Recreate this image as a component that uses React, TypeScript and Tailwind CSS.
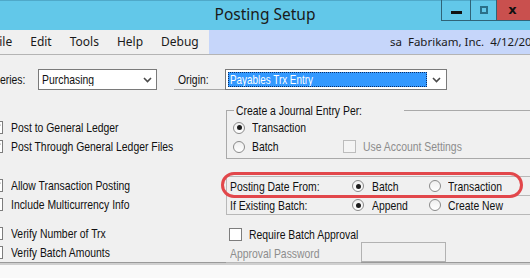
import React from "react";

const T = ({ children, className = "" }: { children: React.ReactNode; className?: string }) => (
  <span className={"inline-block origin-left scale-x-[0.8] whitespace-nowrap " + className}>{children}</span>
);

const Chevron = () => (
  <svg width="9" height="6" viewBox="0 0 9 6" className="block">
    <polyline points="1,1 4.5,4.5 8,1" fill="none" stroke="#4a4a4a" strokeWidth="1.6" />
  </svg>
);

const Check = ({ checked = false, disabled = false }: { checked?: boolean; disabled?: boolean }) => (
  <span
    className={
      "flex-none w-[13px] h-[13px] border flex items-center justify-center " +
      (disabled ? "border-[#bcbcbc] bg-[#f4f4f4]" : "border-[#7d7d7d] bg-white")
    }
  >
    {checked && (
      <svg width="9" height="9" viewBox="0 0 9 9">
        <polyline points="1,4.5 3.5,7 8,1.5" fill="none" stroke="#222" strokeWidth="1.6" />
      </svg>
    )}
  </span>
);

const Radio = ({ checked = false }: { checked?: boolean }) => (
  <span className="flex-none w-[12px] h-[12px] rounded-full border border-[#8a8a8a] bg-gradient-to-b from-[#efefef] to-white flex items-center justify-center">
    {checked && <span className="w-[5px] h-[5px] rounded-full bg-[#1c1c1c]" />}
  </span>
);

const LeftCheck = ({ label, checked = false }: { label: string; checked?: boolean }) => (
  <div className="h-[19px] flex items-center gap-[8px] ml-[-10px]">
    <Check checked={checked} />
    <T>{label}</T>
  </div>
);

export default function App() {
  return (
    <div className="w-[530px] h-[278px] overflow-hidden bg-[#f0f0f0] flex flex-col text-[#111] font-['Liberation_Sans',Arial,sans-serif] text-[13px] leading-none">
      {/* Title bar */}
      <div className="relative flex-none h-[30px] bg-[#62c8e9] border-t border-[#4fa9c9] flex items-center justify-center">
        <span className="font-['Noto_Sans','Open_Sans',sans-serif] text-[15.5px] text-[#1a1a1a] mt-[-1px]">
          Posting Setup
        </span>
        <div className="absolute right-0 top-[-1px] flex h-[21px] border-l border-b border-[#2f6478]">
          <div className="w-[29px] h-full border-r border-[#2f6478] flex items-center justify-center">
            <span className="w-[11px] h-[3px] bg-[#111] mt-[5px]" />
          </div>
          <div className="w-[26px] h-full border-r border-[#2f6478] flex items-center justify-center">
            <span className="w-[8px] h-[8px] border-2 border-[#2a6f88] mt-[-1px]" />
          </div>
          <div className="w-[33px] h-full bg-[#c9504e] flex items-center justify-center">
            <span className="font-['DejaVu_Sans',sans-serif] font-bold text-[13px] text-[#111] mt-[-2px] ml-[-2px]">x</span>
          </div>
        </div>
      </div>

      {/* Menu bar */}
      <div className="flex-none h-[25px] flex border-b border-[#b4b4b4] font-['Noto_Sans','Open_Sans',sans-serif] text-[12px] text-[#1a1a1a]">
        <div className="w-[209px] flex-none bg-[#f0f0f0] overflow-hidden flex items-center">
          <div className="flex items-center gap-[18px] ml-[-7px] whitespace-nowrap">
            <span>File</span>
            <span>Edit</span>
            <span>Tools</span>
            <span>Help</span>
            <span>Debug</span>
          </div>
        </div>
        <div className="flex-1 bg-[#c6d6fa] flex items-center pl-[181px] whitespace-pre overflow-hidden text-[11.5px]">
          <span>sa  Fabrikam, Inc.  4/12/2017</span>
        </div>
      </div>

      {/* Content */}
      <div className="flex-none h-[208px] flex flex-col border-b border-[#9a9a9a]">
        {/* Series / Origin row */}
        <div className="mt-[14px] h-[21px] flex items-center">
          <div className="w-[38px] flex-none overflow-hidden">
            <div className="ml-[-7px]">
              <T>Series:</T>
            </div>
          </div>
          <div className="w-[119px] h-[21px] flex-none border border-[#7a7a7a] bg-white flex items-center pl-[3px] pr-[4px]">
            <div className="flex-1 overflow-hidden">
              <T>Purchasing</T>
            </div>
            <Chevron />
          </div>
          <div className="ml-[17px] w-[51px] h-[21px] flex-none border-b border-[#a8a8a8] flex items-center pl-[4px]">
            <T>Origin:</T>
          </div>
          <div className="w-[222px] h-[21px] flex-none border border-[#7a7a7a] bg-white flex items-center pl-[2px] pr-[5px]">
            <div className="w-[199px] h-[15px] bg-[#3399ff] border border-dotted border-[#0d2f66] flex items-center pl-[1px] text-white overflow-hidden">
              <T className="scale-x-[0.76]">Payables Trx Entry</T>
            </div>
            <div className="flex-1 flex justify-end">
              <Chevron />
            </div>
          </div>
        </div>

        {/* Two columns */}
        <div className="flex">
          {/* Left */}
          <div className="w-[226px] flex-none pt-[28px] flex flex-col">
            <LeftCheck label="Post to General Ledger" checked />
            <LeftCheck label="Post Through General Ledger Files" checked />
            <div className="h-[20px]" />
            <LeftCheck label="Allow Transaction Posting" checked />
            <LeftCheck label="Include Multicurrency Info" />
            <div className="h-[10px]" />
            <LeftCheck label="Verify Number of Trx" />
            <LeftCheck label="Verify Batch Amounts" />
          </div>

          {/* Right */}
          <div className="flex-1 flex flex-col">
            {/* Group box */}
            <div className="relative mt-[20px] border-t border-l border-b border-[#a9a9a9] pt-[7px] pb-[2px] pl-[6px]">
              <div className="absolute left-[7px] top-[-8px] w-[170px] h-[15px] bg-[#f0f0f0] pl-[2px] flex items-center">
                <T>Create a Journal Entry Per:</T>
              </div>
              <div className="h-[19px] flex items-center gap-[7px]">
                <Radio checked />
                <T>Transaction</T>
              </div>
              <div className="h-[19px] flex items-center">
                <div className="w-[110px] flex-none flex items-center gap-[7px]">
                  <Radio />
                  <T>Batch</T>
                </div>
                <div className="flex items-center gap-[7px] text-[#8d8d8d]">
                  <Check disabled />
                  <T>Use Account Settings</T>
                </div>
              </div>
            </div>

            {/* Posting options */}
            <div className="relative mt-[17px] border-t border-l border-[#b8b8b8]">
              <div className="h-[19px] border-b border-[#b8b8b8] flex items-center pl-[3px]">
                <div className="w-[122px] flex-none">
                  <T>Posting Date From:</T>
                </div>
                <div className="w-[77px] flex-none flex items-center gap-[8px]">
                  <Radio checked />
                  <T>Batch</T>
                </div>
                <div className="flex items-center gap-[7px]">
                  <Radio />
                  <T>Transaction</T>
                </div>
              </div>
              <div className="h-[19px] border-b border-[#b8b8b8] flex items-center pl-[3px]">
                <div className="w-[122px] flex-none">
                  <T>If Existing Batch:</T>
                </div>
                <div className="w-[77px] flex-none flex items-center gap-[8px]">
                  <Radio checked />
                  <T>Append</T>
                </div>
                <div className="flex items-center gap-[7px]">
                  <Radio />
                  <T>Create New</T>
                </div>
              </div>
              <div className="absolute left-[-6px] top-[-5px] w-[302px] h-[26px] rounded-[13px] border-[3px] border-[#e2474b] pointer-events-none" />
            </div>

            {/* Approval */}
            <div className="mt-[10px] h-[19px] flex items-center gap-[7px] pl-[3px]">
              <Check />
              <T>Require Batch Approval</T>
            </div>
            <div className="h-[19px] flex items-end">
              <div className="w-[135px] h-[19px] flex-none border-b border-[#b8b8b8] flex items-center pl-[4px] text-[#8d8d8d]">
                <T>Approval Password</T>
              </div>
              <div className="w-[85px] h-[20px] flex-none border border-[#b2b2b2] bg-[#f0f0f0] mb-[1px]" />
            </div>
          </div>
        </div>
      </div>
      <div className="flex-none h-[2px] bg-[#cfcfcf]" />
      <div className="flex-1 bg-[#f9f9f9]" />
    </div>
  );
}
